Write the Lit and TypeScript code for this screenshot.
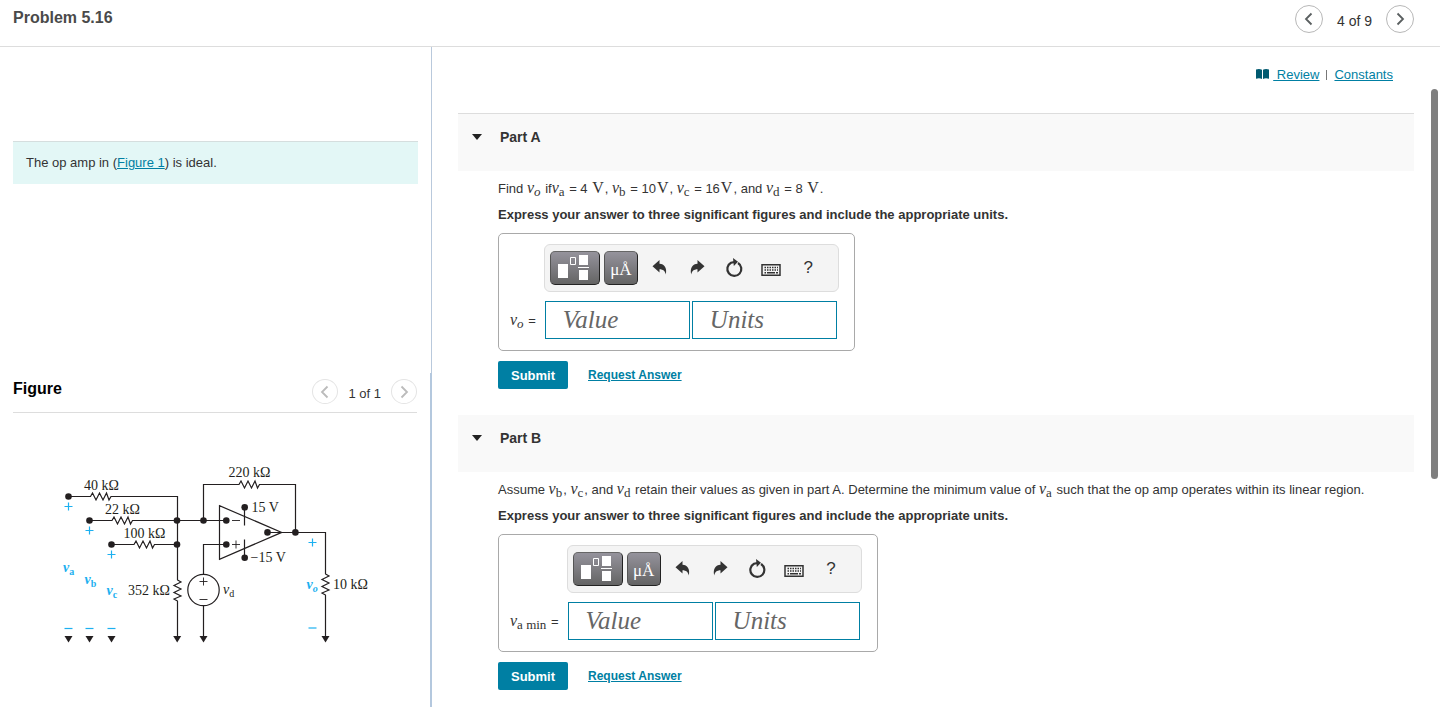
import { LitElement, html, svg, css, nothing } from "lit";
import { customElement, property } from "lit/decorators.js";

const v = (sub: string, upright = true) =>
  html`<span class="math"><i>v</i><sub class=${upright ? "up" : "it"}>${sub}</sub></span>`;

const chevron = (dir: "left" | "right") => svg`
  <path d=${dir === "left" ? "M8.5 1.5 3 7l5.5 5.5" : "M3.5 1.5 9 7l-5.5 5.5"}
    fill="none" stroke="currentColor" stroke-width="1.8"/>`;

@customElement("page-stepper")
class PageStepper extends LitElement {
  @property() label = "";
  @property({ type: Boolean, reflect: true }) muted = false;

  static styles = css`
    :host { display: flex; align-items: center; gap: 14px; color: #333; font-size: 14px; }
    :host([muted]) { gap: 10px; font-size: 13px; }
    button {
      display: grid; place-items: center; box-sizing: border-box;
      width: 28px; height: 28px; padding: 0; border: 1px solid #b8b8b8;
      border-radius: 50%; background: #fff; color: #5a5f60;
    }
    :host([muted]) button { width: 26px; height: 25px; border-color: #e4e4e4; color: #bbb; }
    span { padding-top: 4px; line-height: 16px; }
    svg { width: 12px; height: 14px; }
  `;

  render() {
    return html`
      <button aria-label="Previous"><svg viewBox="0 0 12 14">${chevron("left")}</svg></button>
      <span>${this.label}</span>
      <button aria-label="Next"><svg viewBox="0 0 12 14">${chevron("right")}</svg></button>
    `;
  }
}

@customElement("circuit-figure")
class CircuitFigure extends LitElement {
  static styles = css`
    :host { display: block; }
    svg { display: block; width: 350px; max-width: 100%; }
    .wire { fill: none; stroke: #231f20; stroke-width: 1.2; }
    .dot { fill: #231f20; }
    .sign { stroke: #231f20; stroke-width: 0.9; }
    .cyan { stroke: #1cb0f0; stroke-width: 1.2; }
    text { font: 14px "Liberation Serif", serif; fill: #231f20; }
    .it { font-style: italic; }
    .blue { fill: #1cb0f0; font-weight: bold; }
    .sub { font-size: 10px; }
    .subup { font-size: 10px; font-style: normal; }
  `;

  private zigH(x: number) {
    return `H${x}l2 -3.5 3.5 7 3.5 -7 3.5 7 3.5 -7 2.5 7 2 -3.5`;
  }

  private zigV(y: number) {
    return `V${y}l3.5 2 -7 3.5 7 3.5 -7 3.5 7 3.5 -7 3 3.5 2`;
  }

  private plus(x: number, y: number, r: number, cls: string) {
    return svg`<path class=${cls} d=${`M${x - r} ${y}h${2 * r}M${x} ${y - r}v${2 * r}`}/>`;
  }

  private minus(x: number, y: number, r: number, cls: string) {
    return svg`<path class=${cls} d=${`M${x - r} ${y}h${2 * r}`}/>`;
  }

  private volt(x: number, y: number, sub: string, cls = "", subCls = "subup") {
    return svg`<text class=${"it " + cls} x=${x} y=${y}>v<tspan class=${subCls} dy="3">${sub}</tspan></text>`;
  }

  render() {
    const dots = [
      [68.5, 496.5], [89.5, 520.5], [111.5, 544.5], [177, 520.5], [177, 544.5], [203.5, 520.5],
      [226.3, 520.5], [226.3, 544.5], [244.7, 507.3], [244.7, 557.7], [267.5, 532.4], [295.4, 532.4],
    ];
    const labels: [number, number, string][] = [
      [84, 489.5, "40 kΩ"], [105, 513.5, "22 kΩ"], [123.5, 537.5, "100 kΩ"], [128, 595, "352 kΩ"],
      [228.5, 477, "220 kΩ"], [251.5, 511.5, "15 V"], [250.5, 562, "−15 V"], [333, 589, "10 kΩ"],
    ];
    return html`
      <svg viewBox="40 460 350 190" role="img" aria-label="Summing op amp circuit">
        <path class="wire" d="M68.5 496.5${this.zigH(90.5)}H177.5${this.zigV(580)}V638"/>
        <path class="wire" d="M89.5 520.5${this.zigH(112)}H226"/>
        <path class="wire" d="M111.5 544.5${this.zigH(134)}H177"/>
        <path class="wire" d="M203.5 520.5V484.5${this.zigH(239)}H295.5V532.5"/>
        <path class="wire" d="M219.5 505.7V559.3L281.7 532.4ZM267.5 532.5H325.5${this.zigV(574)}V638"/>
        <path class="wire" d="M226 544.5H203.5V574.3M203.5 605.7V638M244.5 507V525.6M244.5 558V539.4"/>
        <circle class="wire" cx="203.5" cy="590" r="15.7"/>
        ${dots.map(([x, y]) => svg`<circle class="dot" cx=${x} cy=${y} r="3.3"/>`)}
        ${[68.5, 89.5, 111.5, 177.2, 203.5, 325.5].map(
          (x) => svg`<path class="dot" d=${`M${x - 4} 636h8l-4 6.5z`}/>`,
        )}
        ${this.minus(236, 520.5, 4, "sign")}${this.plus(236, 544.5, 4, "sign")}
        ${this.plus(203.5, 581.5, 4, "sign")}${this.minus(203.5, 599.5, 4, "sign")}
        ${this.plus(68.5, 506.5, 4, "cyan")}${this.plus(89.5, 530.5, 4, "cyan")}
        ${this.plus(111.5, 554.5, 4, "cyan")}${this.plus(312.5, 542.5, 4, "cyan")}
        ${[68.5, 89.5, 111.5].map((x) => this.minus(x, 628.5, 4, "cyan"))}
        ${this.minus(312.5, 628, 4, "cyan")}
        ${labels.map(([x, y, t]) => svg`<text x=${x} y=${y}>${t}</text>`)}
        ${this.volt(63, 571.5, "a", "blue")}${this.volt(84.5, 584, "b", "blue")}
        ${this.volt(106.5, 595, "c", "blue")}${this.volt(223, 594, "d")}
        ${this.volt(306.5, 589, "o", "blue", "sub")}
      </svg>
    `;
  }
}

@customElement("answer-box")
class AnswerBox extends LitElement {
  @property({ attribute: false }) label: unknown = nothing;

  static styles = css`
    :host { display: block; }
    .box {
      display: inline-grid; grid-template-columns: auto auto; align-items: center;
      column-gap: 8px; row-gap: 9px; box-sizing: border-box; vertical-align: top;
      padding: 10px 15px 11px 11px; border: 1px solid #a9a9a9; border-radius: 5px;
    }
    .tools {
      grid-column: 2; display: flex; align-items: center; box-sizing: border-box;
      width: 295px; height: 48px; padding: 0 5px; gap: 4px;
      border: 1px solid #ddd; border-radius: 6px; background: #f4f4f4;
    }
    button { border: 0; padding: 0; background: none; color: #333; display: grid; place-items: center; }
    .dark {
      box-sizing: border-box; width: 34px; height: 34px; color: #fff;
      border: 1px solid #222; border-top-color: #666; border-left-color: #555; border-radius: 5px;
      background: linear-gradient(#95939c, #646464);
      font: 17px/30px "Liberation Serif", serif;
    }
    .text { padding-top: 3px; }
    .wide { width: 50px; }
    .plain { width: 33px; height: 34px; font: 17px "Liberation Sans", sans-serif; }
    .dark + .plain { margin-left: 2px; }
    .row { display: flex; gap: 2px; padding-left: 1px; }
    input {
      box-sizing: border-box; width: 145px; height: 38px; padding: 0 17px;
      border: 1px solid #007fa3; border-radius: 0; background: #fff; outline: 0;
      font: italic 25px "Liberation Serif", serif; color: #333;
    }
    input::placeholder { color: #666; opacity: 1; }
    label { padding-top: 2px; font-size: 13px; line-height: 20px; white-space: nowrap; }
    .math { margin-right: 1px; font-family: "Liberation Serif", serif; font-size: 16px; line-height: 0; }
    sub { font-size: 13px; line-height: 0; vertical-align: -3px; }
    .it { font-style: italic; }
  `;

  render() {
    return html`
      <div class="box">
        <div class="tools" role="toolbar">
          <button class="dark wide" aria-label="Templates">
            <svg width="34" height="28" viewBox="0 0 34 28" fill="#fff">
              <path d="M0 10h10v14H0zM21 1h9v10h-9zM21 16h9v10h-9zM20 13h11v1H20z"/>
              <path d="M12.500 3.500h5v7h-5z" fill="none" stroke="#fff"/>
            </svg>
          </button>
          <button class="dark text" aria-label="Units">μÅ</button>
          <button class="plain" aria-label="Undo">
            <svg width="16" height="18" viewBox="0 0 16 18"><path fill="currentColor" d="M7.500 1v3.800c4.800.3 7.800 4 6.300 10.700-.8-3.400-2.500-5.100-6.300-5.200v3.200L.5 7.200z"/></svg>
          </button>
          <button class="plain" aria-label="Redo">
            <svg width="16" height="18" viewBox="0 0 16 18"><path fill="currentColor" d="M8.500 1v3.800C3.700 5.100.7 8.800 2.200 15.500c.8-3.400 2.500-5.100 6.300-5.200v3.200l7-6.300z"/></svg>
          </button>
          <button class="plain" aria-label="Reset">
            <svg width="18" height="20" viewBox="0 0 18 20"><path d="M13 5A7 7 0 1 1 6 4.800L9.500 4" fill="none" stroke="currentColor" stroke-width="2.200"/><path fill="currentColor" d="M8 0l5 3.800L8.800 8z"/></svg>
          </button>
          <button class="plain" aria-label="Keyboard">
            <svg width="20" height="16" viewBox="0 -1 20 16"><path d="M1 3.700h18v10.600H1z" fill="none" stroke="currentColor" stroke-width="1.500"/><path d="M3.500 6.500h13.500M3.500 9h13.500" stroke="currentColor" stroke-width="1.400" stroke-dasharray="1.500 1"/><path d="M3.500 11.700h1.500M6 11.700h8M15 11.700h2" stroke="currentColor" stroke-width="1.400"/></svg>
          </button>
          <button class="plain" aria-label="Help">?</button>
        </div>
        <label for="value">${this.label} =</label>
        <div class="row">
          <input id="value" placeholder="Value" />
          <input aria-label="Units" placeholder="Units" />
        </div>
      </div>
    `;
  }
}

@customElement("app-root")
class AppRoot extends LitElement {
  static styles = css`
    :host {
      display: flex; flex-direction: column; height: 100vh; overflow: hidden; position: relative;
      background: #fff; color: #333; font: 13px/20px "Liberation Sans", Arial, sans-serif;
    }
    a { color: #007fa3; }
    header {
      display: flex; justify-content: space-between; flex: none; box-sizing: border-box;
      height: 47px; padding: 5px 26px 0 13px; border-bottom: 1px solid #ddd;
    }
    h1 { margin: 0; padding-top: 3px; font-size: 16px; line-height: 20px; color: #4a4a4a; }
    header page-stepper { height: 28px; }
    main { display: flex; flex: 1; min-height: 0; }
    .left { display: flex; flex-direction: column; flex: none; width: 30%; }
    .statement {
      flex: none; box-sizing: border-box; height: 326px; padding: 94px 13px 0;
      border-right: 1px solid #b9c9dc;
    }
    .statement p {
      margin: 0; padding: 11px 13px; border-top: 1px solid #d5dede; background: #e3f7f6;
    }
    .figure { flex: 1; min-height: 0; padding: 5px 13px 0; border-right: 2px solid #b4c8de; overflow: hidden; }
    .fighead {
      display: flex; justify-content: space-between; height: 34px;
      border-bottom: 1px solid #ddd;
    }
    .fighead page-stepper { height: 27px; }
    h2 { margin: 0; font-size: 16px; line-height: 22px; color: #000; }
    circuit-figure { padding: 47px 0 0 27px; }
    .right { flex: 1; min-width: 0; padding: 0 26px; overflow: hidden; }
    .links {
      display: flex; justify-content: flex-end; align-items: center; gap: 7px;
      height: 20px; padding: 18px 21px 28px;
    }
    .links svg { display: inline-block; margin-right: 4px; }
    .bar { width: 1px; height: 10px; background: #777; }
    h3 {
      display: flex; align-items: center; gap: 18px; box-sizing: border-box; height: 57px;
      margin: 0; padding: 0 14px 11px; background: #f9f9f9; font-size: 14px; color: #333;
    }
    .first { border-top: 1px solid #ddd; height: 58px; }
    .body { padding: 8px 0 26px 40px; }
    .body p { margin: 0 0 6px; }
    .body .ask { margin-bottom: 8px; font-weight: bold; }
    .math, .rm { font-family: "Liberation Serif", serif; font-size: 16px; line-height: 0; }
    .math { margin-right: 1px; }
    .rm { padding: 0 1px; }
    sub { font-size: 13px; line-height: 0; vertical-align: -3px; }
    .it { font-style: italic; }
    .actions { display: flex; align-items: center; gap: 20px; margin-top: 10px; }
    .submit {
      width: 70px; height: 28px; padding: 0; border: 0; border-radius: 2px; background: #007fa3;
      color: #fff; font: bold 13px "Liberation Sans", Arial, sans-serif;
    }
    .actions a { font-size: 12px; font-weight: bold; }
    .thumb {
      position: absolute; right: 2px; top: 89px; width: 7px; height: 390px;
      border-radius: 4px; background: #7f7f7f;
    }
  `;

  private part(title: string, first: boolean, text: unknown, label: unknown) {
    return html`
      <section>
        <h3 class=${first ? "first" : ""}>
          <svg width="10" height="6" viewBox="0 0 10 6"><path d="M0 0h10L5 6z" fill="#222"/></svg>
          ${title}
        </h3>
        <div class="body">
          <p>${text}</p>
          <p class="ask">Express your answer to three significant figures and include the appropriate units.</p>
          <answer-box .label=${label}></answer-box>
          <div class="actions">
            <button class="submit">Submit</button>
            <a href="#">Request Answer</a>
          </div>
        </div>
      </section>
    `;
  }

  render() {
    const V = html`<span class="rm">V</span>`;
    return html`
      <header>
        <h1>Problem 5.16</h1>
        <page-stepper label="4 of 9"></page-stepper>
      </header>
      <main>
        <div class="left">
          <div class="statement">
            <p>The op amp in (<a href="#figure">Figure 1</a>) is ideal.</p>
          </div>
          <div class="figure">
            <div class="fighead">
              <h2>Figure</h2>
              <page-stepper label="1 of 1" muted></page-stepper>
            </div>
            <circuit-figure></circuit-figure>
          </div>
        </div>
        <div class="right">
          <nav class="links">
            <span><svg width="13" height="10" viewBox="0 0 13 10"><path fill="#005a70" d="M0 .5Q3.500-.5 6 .8V10Q3.500 8.800 0 9.800zM13 .5Q9.500-.5 7 .8V10Q9.500 8.800 13 9.800z"/></svg><a href="#">&nbsp;Review</a></span>
            <span class="bar"></span>
            <a href="#">Constants</a>
          </nav>
          ${this.part(
            "Part A", true,
            html`Find ${v("o", false)} if${v("a")} = 4 ${V}, ${v("b")} = 10${V}, ${v("c")} = 16${V}, and ${v("d")} = 8 ${V}.`,
            v("o", false),
          )}
          ${this.part(
            "Part B", false,
            html`Assume ${v("b")}, ${v("c")}, and ${v("d")} retain their values as given in part A. Determine the minimum value of ${v("a")} such that the op amp operates within its linear region.`,
            v("a min"),
          )}
        </div>
      </main>
      <div class="thumb"></div>
    `;
  }
}
